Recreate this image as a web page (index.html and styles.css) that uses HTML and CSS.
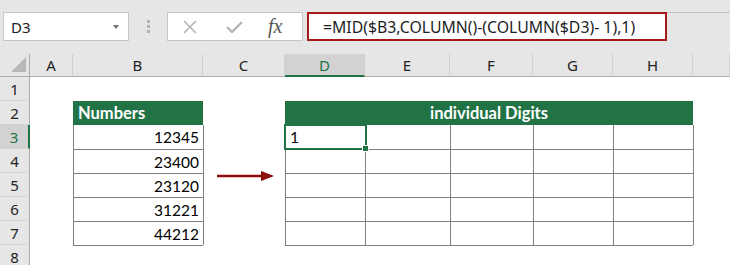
FILE: index.html
```html
<!DOCTYPE html>
<html lang="en">
<head>
    <meta charset="UTF-8">
    <title>MID formula</title>
    <link rel="stylesheet" href="styles.css">
</head>
<body>

    <div class="topbar">
        <div class="namebox">
            <span>D3</span>
            <span class="drop"></span>
        </div>
        <div class="dots"><i></i><i></i><i></i></div>
        <div class="fnbox">
            <svg class="ico" width="16" height="14" viewBox="0 0 16 14">
                <path d="M2 1 L14 13 M14 1 L2 13" stroke="#b4b4b4" stroke-width="1.6" fill="none"/>
            </svg>
            <svg class="ico" width="17" height="12" viewBox="0 0 17 12">
                <path d="M1 6 L6 11 L16 1" stroke="#b4b4b4" stroke-width="2.4" fill="none"/>
            </svg>
            <span class="fx">fx</span>
        </div>
        <div class="formula">=MID($B3,COLUMN()-(COLUMN($D3)- 1),1)</div>
        <div class="rest"></div>
    </div>

    <div class="sheet">
        <!-- column headers -->
        <div class="ch corner"><span class="tri"></span></div>
        <div class="ch">A</div>
        <div class="ch">B</div>
        <div class="ch">C</div>
        <div class="ch active-col">D</div>
        <div class="ch">E</div>
        <div class="ch">F</div>
        <div class="ch">G</div>
        <div class="ch">H</div>
        <div class="ch"></div>

        <!-- row 1 -->
        <div class="rh">1</div>
        <div></div><div></div><div></div><div></div><div></div><div></div><div></div><div></div><div></div>

        <!-- row 2 -->
        <div class="rh">2</div>
        <div></div>
        <div class="head">Numbers</div>
        <div></div>
        <div class="head center span5">individual Digits</div>
        <div></div>

        <!-- row 3 -->
        <div class="rh active-row">3</div>
        <div></div>
        <div class="num bl">12345</div>
        <div class="bl"></div>
        <div class="bl selected">1</div>
        <div class="bl"></div><div class="bl"></div><div class="bl"></div><div class="bl"></div><div class="bl"></div>

        <!-- row 4 -->
        <div class="rh">4</div>
        <div></div>
        <div class="num bl bt">23400</div>
        <div class="bl"></div>
        <div class="bl bt"></div><div class="bl bt"></div><div class="bl bt"></div><div class="bl bt"></div><div class="bl bt"></div><div class="bl"></div>

        <!-- row 5 -->
        <div class="rh">5</div>
        <div></div>
        <div class="num bl bt">23120</div>
        <div class="bl arrow-cell">
            <svg width="57" height="10" viewBox="0 0 57 10">
                <path d="M0 5 L46 5" stroke="#8e0b0b" stroke-width="2.5"/>
                <path d="M44 0 L57 5 L44 10 Z" fill="#8e0b0b"/>
            </svg>
        </div>
        <div class="bl bt"></div><div class="bl bt"></div><div class="bl bt"></div><div class="bl bt"></div><div class="bl bt"></div><div class="bl"></div>

        <!-- row 6 -->
        <div class="rh">6</div>
        <div></div>
        <div class="num bl bt">31221</div>
        <div class="bl"></div>
        <div class="bl bt"></div><div class="bl bt"></div><div class="bl bt"></div><div class="bl bt"></div><div class="bl bt"></div><div class="bl"></div>

        <!-- row 7 -->
        <div class="rh">7</div>
        <div></div>
        <div class="num bl bt">44212</div>
        <div class="bl"></div>
        <div class="bl bt"></div><div class="bl bt"></div><div class="bl bt"></div><div class="bl bt"></div><div class="bl bt"></div><div class="bl"></div>

        <!-- row 8 -->
        <div class="rh">8</div>
        <div></div>
        <div class="bt"></div>
        <div></div>
        <div class="bt"></div><div class="bt"></div><div class="bt"></div><div class="bt"></div><div class="bt"></div><div></div>
    </div>

</body>
</html>
```

FILE: styles.css
```css
body {
    margin: 0;
    padding: 0;
    width: 730px;
    height: 265px;
    overflow: hidden;
    background-color: #fff;
    font-family: "Noto Sans", sans-serif;
}

/* formula bar */

.topbar {
    height: 54px;
    box-sizing: border-box;
    padding: 12px 0 0 3px;
    background-color: #e6e6e6;
    display: flex;
    align-items: flex-start;
}

.namebox {
    width: 126px;
    height: 29px;
    box-sizing: border-box;
    border: 1px solid #c6c6c6;
    background-color: #fff;
    display: flex;
    align-items: center;
    justify-content: space-between;
    padding: 0 9px 0 7px;
    font-size: 15px;
    color: #222;
}

.drop {
    width: 0;
    height: 0;
    border-left: 3px solid transparent;
    border-right: 3px solid transparent;
    border-top: 4px solid #707070;
}

.dots {
    width: 38px;
    height: 29px;
    display: flex;
    flex-direction: column;
    align-items: center;
    justify-content: center;
    gap: 2px;
}

.dots i {
    display: block;
    width: 3px;
    height: 3px;
    background-color: #b4b4b4;
}

.fnbox {
    width: 136px;
    height: 29px;
    box-sizing: border-box;
    border: 1px solid #c6c6c6;
    background-color: #fff;
    display: flex;
    align-items: center;
    padding-left: 14px;
    gap: 28px;
}

.fx {
    font-family: "Liberation Serif", serif;
    font-style: italic;
    font-size: 20px;
    color: #555;
    margin-left: -3px;
}

.formula {
    width: 360px;
    height: 29px;
    margin-left: 4px;
    box-sizing: border-box;
    border: 2px solid #a31b1b;
    background-color: #fff;
    display: flex;
    align-items: center;
    padding-left: 14px;
    font-size: 15.8px;
    color: #1e1e1e;
}

.rest {
    flex: 1;
    height: 29px;
    border-top: 1px solid #c6c6c6;
}

/* sheet */

.sheet {
    display: grid;
    grid-template-columns: 30px 43px 130px 82px 80px 85px 83px 80px 80px 37px;
    grid-template-rows: 23px repeat(8, 24px);
    font-family: Lato, sans-serif;
    font-size: 15.5px;
    color: #000;
}

.sheet > div {
    box-sizing: border-box;
    display: flex;
    align-items: center;
}

.ch {
    background-color: #e6e6e6;
    border-right: 1px solid #d0d0d0;
    border-bottom: 1px solid #ababab;
    justify-content: center;
    font-family: "Noto Sans", sans-serif;
    font-size: 15px;
    color: #222;
}

.corner {
    position: relative;
    border-right: 1px solid #ababab;
}

.tri {
    position: absolute;
    right: 3px;
    bottom: 4px;
    width: 0;
    height: 0;
    border-left: 15px solid transparent;
    border-bottom: 15px solid #b8b8b8;
}

.rh {
    background-color: #e6e6e6;
    border-right: 1px solid #ababab;
    border-bottom: 1px solid #d4d4d4;
    justify-content: center;
    font-family: "Noto Sans", sans-serif;
    font-size: 15px;
    color: #222;
}

.active-col {
    background-color: #d2d2d2;
    color: #217346;
    border-bottom: 2px solid #217346;
}

.active-row {
    background-color: #d2d2d2;
    color: #217346;
    border-right: 2px solid #217346;
}

.head {
    background-color: #217346;
    color: #fff;
    font-weight: bold;
    font-size: 16.5px;
    padding-left: 5px;
}

.head.center {
    justify-content: center;
    padding-left: 0;
}

.span5 {
    grid-column: span 5;
}

.num {
    justify-content: flex-end;
    padding-right: 4px;
}

.bl {
    border-left: 1px solid #7f7f7f;
}

.bt {
    border-top: 1px solid #7f7f7f;
}

.sheet > .selected {
    position: relative;
    padding-left: 5px;
    border-left: none;
}

.selected::after {
    content: "";
    position: absolute;
    left: -1px;
    top: -1px;
    right: -2px;
    bottom: -1px;
    border: 2px solid #217346;
}

.selected::before {
    content: "";
    position: absolute;
    right: -4px;
    bottom: -3px;
    width: 5px;
    height: 5px;
    background-color: #217346;
    border: 1px solid #fff;
    z-index: 2;
}

.sheet > .arrow-cell {
    align-items: flex-start;
}

.arrow-cell svg {
    margin: -2px 0 0 13px;
}
```
